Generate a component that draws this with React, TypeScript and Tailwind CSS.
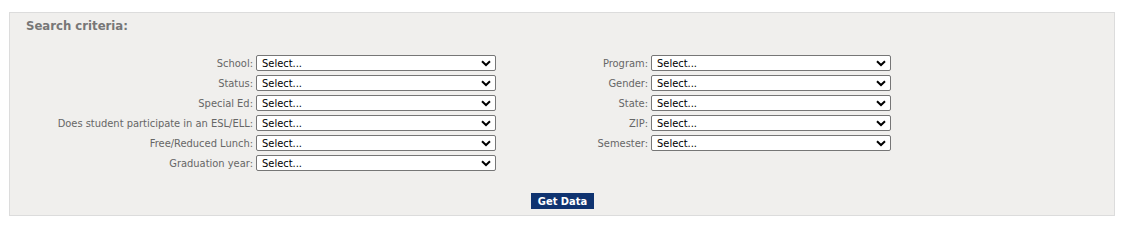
import React from "react";

const font = { fontFamily: '"DejaVu Sans Condensed", "Liberation Sans", sans-serif' };

function Sel() {
  return (
    <div className="flex h-[16px] w-[240px] items-center justify-between rounded-[2px] border border-[#767676] bg-white pl-[5px] pr-[4px]">
      <span className="text-[11px] leading-none text-black">Select...</span>
      <svg width="10" height="7" viewBox="0 0 10 7" className="block">
        <path d="M1 1.2 L5 5 L9 1.2" fill="none" stroke="#000" strokeWidth="2" />
      </svg>
    </div>
  );
}

function Row({ label, w }: { label: string; w: string }) {
  return (
    <div className="flex h-[20px] items-center">
      <div className={`${w} pr-[3px] text-right text-[11px] leading-none text-[#666]`}>{label}</div>
      <Sel />
    </div>
  );
}

export default function App() {
  const left = [
    "School:",
    "Status:",
    "Special Ed:",
    "Does student participate in an ESL/ELL:",
    "Free/Reduced Lunch:",
    "Graduation year:",
  ];
  const right = ["Program:", "Gender:", "State:", "ZIP:", "Semester:"];
  return (
    <div className="min-h-[225px] bg-white pt-[12px] pl-[9px] pr-[9px]" style={font}>
      <div className="h-[204px] border border-[#dcdcdc] bg-[#f0efed]">
        <div className="pl-[16px] pt-[5px] text-[13px] font-bold leading-[16px] text-[#777]">Search criteria:</div>
        <div className="mt-[19px] flex">
          <div className="flex flex-col">
            {left.map((l) => (
              <Row key={l} label={l} w="w-[246px]" />
            ))}
          </div>
          <div className="flex flex-col">
            {right.map((l) => (
              <Row key={l} label={l} w="w-[155px]" />
            ))}
          </div>
        </div>
        <div className="mt-[20px] flex justify-center pl-[1px]">
          <button className="h-[16px] w-[63px] bg-[#0f3370] text-[11px] font-bold leading-none text-white">Get Data</button>
        </div>
      </div>
    </div>
  );
}
